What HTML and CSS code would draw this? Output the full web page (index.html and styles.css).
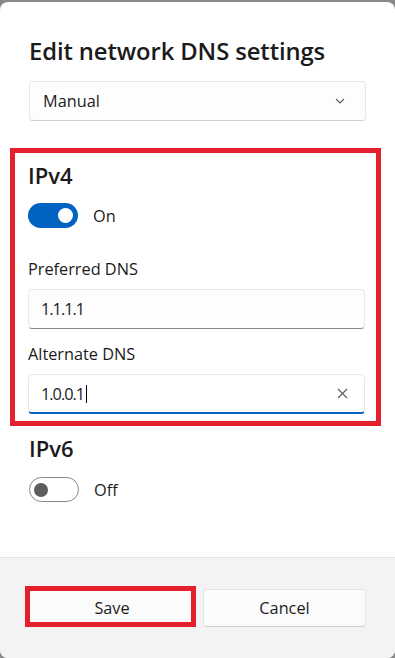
FILE: index.html
```html
<!DOCTYPE html>
<html lang="en">
<head>
<meta charset="utf-8">
<title>Edit network DNS settings</title>
<link rel="stylesheet" href="styles.css">
</head>
<body>
<div class="dialog">
  <div class="content">
    <h1 class="title">Edit network DNS settings</h1>
    <div class="select">
      <span class="select-value">Manual</span>
      <svg class="chevron" width="10" height="6" viewBox="0 0 10 6"><path d="M1 1 L5 5 L9 1" fill="none" stroke="#5c5c5c" stroke-width="1.1"/></svg>
    </div>

    <section class="group highlight">
      <h2 class="group-title">IPv4</h2>
      <div class="toggle-row">
        <span class="toggle on"><span class="knob"></span></span>
        <span class="toggle-label">On</span>
      </div>
      <label class="field-label">Preferred DNS</label>
      <div class="input"><span class="input-text">1.1.1.1</span></div>
      <label class="field-label second">Alternate DNS</label>
      <div class="input focused">
        <span class="input-text">1.0.0.1</span><span class="caret"></span>
        <svg class="clear" width="11" height="11" viewBox="0 0 11 11"><path d="M1 1 L10 10 M10 1 L1 10" fill="none" stroke="#5c5c5c" stroke-width="1.1"/></svg>
      </div>
    </section>

    <section class="group v6">
      <h2 class="group-title">IPv6</h2>
      <div class="toggle-row">
        <span class="toggle off"><span class="knob"></span></span>
        <span class="toggle-label">Off</span>
      </div>
    </section>
  </div>

  <div class="footer">
    <button class="btn save">Save</button>
    <button class="btn">Cancel</button>
  </div>
</div>
</body>
</html>
```

FILE: styles.css
```css
* { box-sizing: border-box; }

html, body {
  margin: 0;
  padding: 0;
  height: 658px;
  overflow: hidden;
}

body {
  background: #8a8a8a;
  font-family: "Open Sans", "Noto Sans", sans-serif;
  color: #1b1b1b;
}

.dialog {
  margin: 2px 0 0;
  height: 656px;
  background: #ffffff;
  border-radius: 8px;
  overflow: hidden;
  display: flex;
  flex-direction: column;
}

.content {
  flex: 1;
  padding: 34px 29px 0;
}

.title {
  margin: 0;
  font-size: 23.8px;
  line-height: 30px;
  font-weight: 600;
  letter-spacing: -0.1px;
}

.select {
  margin-top: 15px;
  height: 40px;
  border: 1px solid #e6e6e6;
  border-bottom-color: #d0d0d0;
  border-radius: 4px;
  background: #fdfdfd;
  display: flex;
  align-items: center;
  justify-content: space-between;
  padding: 0 20px 0 13px;
}

.select-value {
  font-size: 16.3px;
}

.group-title {
  margin: 0;
  font-size: 22px;
  line-height: 28px;
  font-weight: 600;
}

.highlight {
  margin: 27px -15px 0 -19px;
  border: 5px solid #e3202b;
  padding: 8px 11px 7px 13px;
}

.toggle-row {
  margin-top: 14px;
  display: flex;
  align-items: center;
  gap: 15px;
}

.toggle {
  width: 50px;
  height: 25px;
  border-radius: 13px;
  display: flex;
  align-items: center;
  padding: 0 5px;
}

.toggle.on {
  background: #0062c1;
  justify-content: flex-end;
}

.toggle.on .knob {
  width: 15px;
  height: 15px;
  border-radius: 50%;
  background: #ffffff;
}

.toggle.off {
  border: 1px solid #8a8a8a;
  justify-content: flex-start;
  padding: 0 4px;
}

.toggle.off .knob {
  width: 14px;
  height: 14px;
  border-radius: 50%;
  background: #5d5d5d;
}

.toggle-label {
  font-size: 16.3px;
  line-height: 22px;
}

.field-label {
  display: block;
  margin-top: 30px;
  font-size: 16.3px;
  line-height: 22px;
}

.field-label.second {
  margin-top: 14px;
}

.input {
  margin-top: 9px;
  height: 40px;
  border: 1px solid #e8e8e8;
  border-bottom: 1px solid #8a8a8a;
  border-radius: 4px;
  background: #fdfdfd;
  display: flex;
  align-items: center;
  padding: 0 16px 0 12px;
}

.input.focused {
  border-bottom: 2px solid #0062c1;
  background: #ffffff;
}

.input-text {
  font-size: 16.3px;
  letter-spacing: -1px;
}

.caret {
  width: 1px;
  height: 18px;
  background: #000;
  margin-left: 2px;
}

.clear {
  margin-left: auto;
}

.v6 {
  margin-top: 8px;
}

.v6 .toggle-row {
  margin-top: 15px;
}

.footer {
  height: 101px;
  background: #f3f3f3;
  border-top: 1px solid #e5e5e5;
  padding: 31px 29px 0 28px;
  display: grid;
  grid-template-columns: 168px 1fr;
  gap: 7px;
  align-content: start;
}

.btn {
  height: 38px;
  border: 1px solid #e5e5e5;
  border-bottom-color: #cfcfcf;
  border-radius: 4px;
  background: #fbfbfb;
  font-family: "Open Sans", "Noto Sans", sans-serif;
  font-size: 16.3px;
  color: #1b1b1b;
  padding: 0;
}

.save {
  position: relative;
}

.save::after {
  content: "";
  position: absolute;
  top: -4px;
  left: -4px;
  right: -1px;
  bottom: -1px;
  border: 5px solid #e3202b;
}
```
